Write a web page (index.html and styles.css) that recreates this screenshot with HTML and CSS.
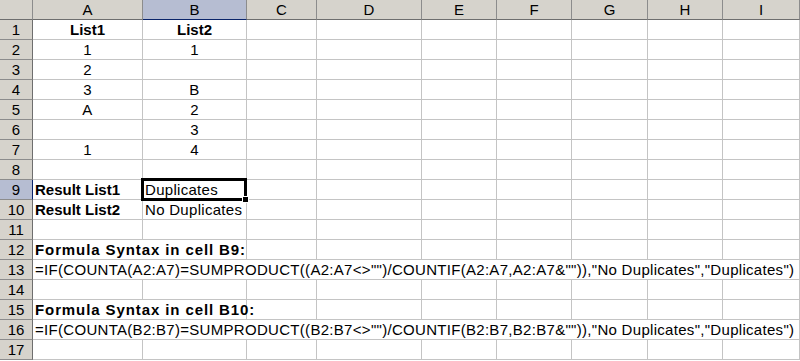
FILE: index.html
```html
<!DOCTYPE html>
<html lang="en">
<head>
    <meta charset="UTF-8">
    <title>Duplicates check</title>
    <link rel="stylesheet" href="styles.css">
</head>
<body>

<div class="sheet">
    <!-- column headers -->
    <div class="hd corner"></div>
    <div class="hd">A</div>
    <div class="hd hd-sel">B</div>
    <div class="hd">C</div>
    <div class="hd">D</div>
    <div class="hd">E</div>
    <div class="hd">F</div>
    <div class="hd">G</div>
    <div class="hd">H</div>
    <div class="hd">I</div>

    <div class="rh">1</div>
    <div class="c ctr b">List1</div><div class="c ctr b">List2</div>
    <div class="c"></div><div class="c"></div><div class="c"></div><div class="c"></div><div class="c"></div><div class="c"></div><div class="c"></div>

    <div class="rh">2</div>
    <div class="c ctr">1</div><div class="c ctr">1</div>
    <div class="c"></div><div class="c"></div><div class="c"></div><div class="c"></div><div class="c"></div><div class="c"></div><div class="c"></div>

    <div class="rh">3</div>
    <div class="c ctr">2</div><div class="c ctr"></div>
    <div class="c"></div><div class="c"></div><div class="c"></div><div class="c"></div><div class="c"></div><div class="c"></div><div class="c"></div>

    <div class="rh">4</div>
    <div class="c ctr">3</div><div class="c ctr">B</div>
    <div class="c"></div><div class="c"></div><div class="c"></div><div class="c"></div><div class="c"></div><div class="c"></div><div class="c"></div>

    <div class="rh">5</div>
    <div class="c ctr">A</div><div class="c ctr">2</div>
    <div class="c"></div><div class="c"></div><div class="c"></div><div class="c"></div><div class="c"></div><div class="c"></div><div class="c"></div>

    <div class="rh">6</div>
    <div class="c ctr"></div><div class="c ctr">3</div>
    <div class="c"></div><div class="c"></div><div class="c"></div><div class="c"></div><div class="c"></div><div class="c"></div><div class="c"></div>

    <div class="rh">7</div>
    <div class="c ctr">1</div><div class="c ctr">4</div>
    <div class="c"></div><div class="c"></div><div class="c"></div><div class="c"></div><div class="c"></div><div class="c"></div><div class="c"></div>

    <div class="rh">8</div>
    <div class="c"></div><div class="c"></div>
    <div class="c"></div><div class="c"></div><div class="c"></div><div class="c"></div><div class="c"></div><div class="c"></div><div class="c"></div>

    <div class="rh rh-sel">9</div>
    <div class="c b">Result List1</div><div class="c active">Duplicates</div>
    <div class="c"></div><div class="c"></div><div class="c"></div><div class="c"></div><div class="c"></div><div class="c"></div><div class="c"></div>

    <div class="rh">10</div>
    <div class="c b">Result List2</div><div class="c">No Duplicates</div>
    <div class="c"></div><div class="c"></div><div class="c"></div><div class="c"></div><div class="c"></div><div class="c"></div><div class="c"></div>

    <div class="rh">11</div>
    <div class="c"></div><div class="c"></div>
    <div class="c"></div><div class="c"></div><div class="c"></div><div class="c"></div><div class="c"></div><div class="c"></div><div class="c"></div>

    <div class="rh">12</div>
    <div class="c b title span2">Formula Syntax in cell B9:</div>
    <div class="c"></div><div class="c"></div><div class="c"></div><div class="c"></div><div class="c"></div><div class="c"></div><div class="c"></div>

    <div class="rh">13</div>
    <div class="c span9">=IF(COUNTA(A2:A7)=SUMPRODUCT((A2:A7&lt;&gt;"")/COUNTIF(A2:A7,A2:A7&amp;"")),"No Duplicates","Duplicates")</div>

    <div class="rh">14</div>
    <div class="c"></div><div class="c"></div>
    <div class="c"></div><div class="c"></div><div class="c"></div><div class="c"></div><div class="c"></div><div class="c"></div><div class="c"></div>

    <div class="rh">15</div>
    <div class="c b title span2">Formula Syntax in cell B10:</div>
    <div class="c"></div><div class="c"></div><div class="c"></div><div class="c"></div><div class="c"></div><div class="c"></div><div class="c"></div>

    <div class="rh">16</div>
    <div class="c span9">=IF(COUNTA(B2:B7)=SUMPRODUCT((B2:B7&lt;&gt;"")/COUNTIF(B2:B7,B2:B7&amp;"")),"No Duplicates","Duplicates")</div>

    <div class="rh">17</div>
    <div class="c"></div><div class="c"></div>
    <div class="c"></div><div class="c"></div><div class="c"></div><div class="c"></div><div class="c"></div><div class="c"></div><div class="c"></div>
</div>

</body>
</html>
```

FILE: styles.css
```css
body {
    margin: 0;
    background: #ffffff;
    font-family: 'Liberation Sans', Arial, sans-serif;
    font-size: 15px;
    color: #000000;
    overflow: hidden;
}

.sheet {
    display: grid;
    grid-template-columns: 33px 110px 104px 70px 105px 75px 75px 76px 75px 77px;
    grid-auto-rows: 20px;
    width: 800px;
}

.sheet > div {
    box-sizing: border-box;
    white-space: nowrap;
    line-height: 19px;
}

.hd {
    background: #d6d3cc;
    border-right: 1px solid #8c8c8c;
    border-bottom: 1px solid #6e6e6e;
    text-align: center;
}

.hd-sel {
    background: #b6bdd2;
    border-bottom-color: #0a246a;
}

.rh {
    background: #d6d3cc;
    border-right: 1px solid #6e6e6e;
    border-bottom: 1px solid #8c8c8c;
    text-align: center;
}

.rh-sel {
    background: #b6bdd2;
    border-right-color: #0a246a;
}

.c {
    border-right: 1px solid #c4c4c4;
    border-bottom: 1px solid #c4c4c4;
    padding: 0 2px;
    overflow: visible;
    letter-spacing: 0.3px;
}

.ctr {
    text-align: center;
}

.b {
    font-weight: bold;
    letter-spacing: 0;
}

.title {
    letter-spacing: 0.9px;
}

.span2 {
    grid-column: span 2;
}

.span9 {
    grid-column: span 9;
}

/* selected cell */
.active {
    position: relative;
}

.active::before {
    content: "";
    position: absolute;
    left: -2px;
    top: -2px;
    right: -1px;
    bottom: -2px;
    border: 3px solid #000000;
}

.active::after {
    content: "";
    position: absolute;
    right: -3px;
    bottom: -4px;
    width: 5px;
    height: 5px;
    background: #000000;
    border: 1px solid #ffffff;
}
```
